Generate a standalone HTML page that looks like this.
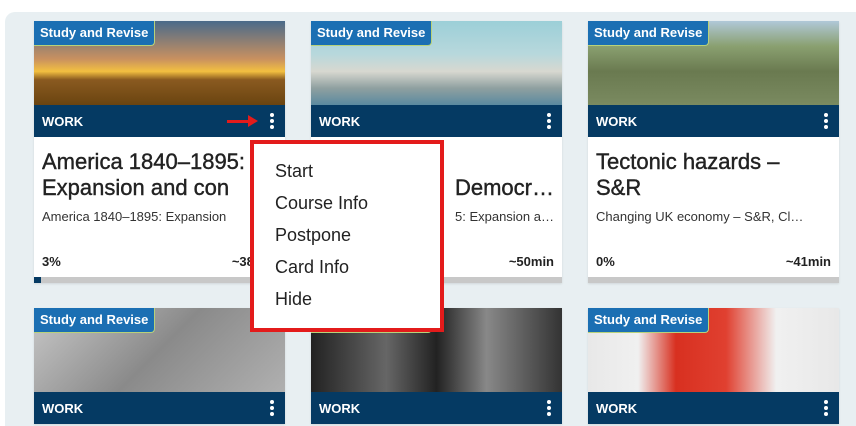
<!DOCTYPE html>
<html><head><style>
*{margin:0;padding:0;box-sizing:border-box}
html,body{width:856px;height:426px;overflow:hidden}
body{background:#fff;font-family:"Liberation Sans",sans-serif;position:relative;color:#222}
.panel{position:absolute;left:5px;top:12px;width:860px;height:430px;background:#e8eff2;border-radius:10px}
.card{position:absolute;width:251px;background:#fff;box-shadow:0 1px 2px rgba(0,0,0,.1)}
.img{height:84px;position:relative}
.tag{position:absolute;left:0;top:0;background:#1b6fb3;color:#fff;font-size:13px;font-weight:bold;padding:4px 6px 5px;border-right:1px solid #b8d27a;border-bottom:1px solid #b8d27a;border-radius:0 0 4px 0}
.bar{height:32px;background:#053a63;color:#fff;font-size:13px;font-weight:bold;padding:9px 8px;position:relative}
.dots{position:absolute;right:11px;top:8px;width:4px}
.dots i{display:block;width:4px;height:4px;background:#fff;border-radius:50%;margin-bottom:2px}
.body{height:140px;padding:12px 8px;position:relative}
.t{font-size:22px;font-weight:normal;line-height:26px;white-space:nowrap;overflow:hidden;color:#222;-webkit-text-stroke:0.4px #222}
.s{font-size:13px;margin-top:8px;white-space:nowrap;overflow:hidden;color:#333}
.f{position:absolute;bottom:8px;left:8px;right:8px;font-size:13px;font-weight:bold;display:flex;justify-content:space-between}
.prog{height:6px;background:#c8c8c8}
.menu{position:absolute;left:250px;top:140px;width:194px;height:192px;background:#fff;border:4px solid #e31b1b}
.menu div{position:absolute;left:21px;font-size:18px;color:#222}
</style></head><body>
<div class="panel"></div>

<div class="card" style="left:34px;top:21px">
<div class="img" style="background:linear-gradient(#4a6a8a 0%,#c89060 45%,#f3c040 60%,#8a5a20 70%,#6a4410 100%)"><div class="tag">Study and Revise</div></div>
<div class="bar">WORK<div class="dots"><i></i><i></i><i></i></div>
<div style="position:absolute;left:193px;top:15px;width:24px;height:3px;background:#e31b1b"></div>
<div style="position:absolute;left:214px;top:10px;border-left:10px solid #e31b1b;border-top:6px solid transparent;border-bottom:6px solid transparent"></div></div>
<div class="body"><div class="t">America 1840–1895:<br>Expansion and con</div><div class="s">America 1840–1895: Expansion</div><div class="f"><span>3%</span><span>~38min</span></div></div>
<div class="prog"><div style="width:7px;height:6px;background:#053a63"></div></div>
</div>

<div class="card" style="left:311px;top:21px">
<div class="img" style="background:linear-gradient(#9ccfd8 0%,#b8d8dc 40%,#d8d8d0 60%,#8fa0a0 80%,#5a8aa0 100%)"><div class="tag">Study and Revise</div></div>
<div class="bar">WORK<div class="dots"><i></i><i></i><i></i></div></div>
<div class="body"><div class="t">&nbsp;</div><div class="t" style="text-align:right">Democr…</div><div class="s" style="text-align:right">5: Expansion a…</div><div class="f"><span></span><span>~50min</span></div></div>
<div class="prog"></div>
</div>

<div class="card" style="left:588px;top:21px">
<div class="img" style="background:linear-gradient(#b0c8d8 0%,#8aa070 30%,#6a7a50 60%,#7a8a60 100%)"><div class="tag">Study and Revise</div></div>
<div class="bar">WORK<div class="dots"><i></i><i></i><i></i></div></div>
<div class="body"><div class="t">Tectonic hazards –<br>S&amp;R</div><div class="s">Changing UK economy – S&amp;R, Cl…</div><div class="f"><span>0%</span><span>~41min</span></div></div>
<div class="prog"></div>
</div>

<div class="card" style="left:34px;top:308px">
<div class="img" style="background:linear-gradient(135deg,#c8c8c8,#8a8a8a 50%,#b0b0b0)"><div class="tag">Study and Revise</div></div>
<div class="bar">WORK<div class="dots"><i></i><i></i><i></i></div></div>
</div>
<div class="card" style="left:311px;top:308px">
<div class="img" style="background:linear-gradient(90deg,#222,#666 30%,#222 50%,#888 70%,#333)"><div class="tag">Study and Revise</div></div>
<div class="bar">WORK<div class="dots"><i></i><i></i><i></i></div></div>
</div>
<div class="card" style="left:588px;top:308px">
<div class="img" style="background:linear-gradient(90deg,#e8e8e8,#f0f0f0 20%,#d83020 35%,#e04030 55%,#f0f0f0 75%,#e8e8e8)"><div class="tag">Study and Revise</div></div>
<div class="bar">WORK<div class="dots"><i></i><i></i><i></i></div></div>
</div>

<div class="menu">
<div style="top:17px">Start</div>
<div style="top:49px">Course Info</div>
<div style="top:81px">Postpone</div>
<div style="top:113px">Card Info</div>
<div style="top:145px">Hide</div>
</div>
</body></html>
